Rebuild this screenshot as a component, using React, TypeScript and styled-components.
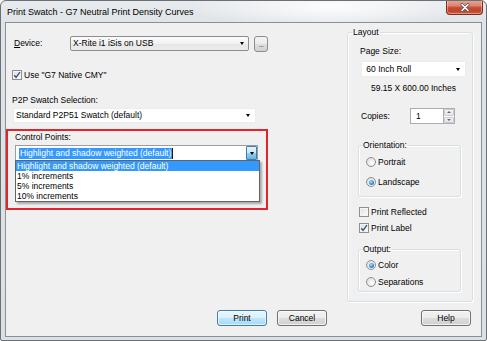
import React from 'react';
import styled, { createGlobalStyle, css } from 'styled-components';

const Global = createGlobalStyle`
  html, body { margin: 0; padding: 0; background: #ffffff; }
  body {
    font-family: "Liberation Sans", Arial, sans-serif;
    font-size: 8.5px;
    color: #000;
  }
  * { box-sizing: border-box; }
`;

const Window = styled.div`
  width: 487px;
  height: 341px;
  border: 1px solid #6b7077;
  border-radius: 6px 6px 2px 2px;
  background:
    radial-gradient(ellipse 140px 22px at 330px 6px, rgba(255,255,255,0.9), rgba(255,255,255,0) 100%),
    linear-gradient(180deg, #e8ebee 0px, #dfe3e7 22px, #dce0e5 100%);
  display: flex;
  flex-direction: column;
  overflow: hidden;
`;

const TitleBar = styled.div`
  height: 21px;
  display: flex;
  align-items: flex-start;
  justify-content: space-between;
  padding-left: 6px;
`;

const TitleText = styled.div`
  font-size: 9px;
  line-height: 12px;
  padding-top: 5px;
  color: #000;
  white-space: nowrap;
`;

const CloseButton = styled.div`
  width: 37px;
  height: 15px;
  margin-right: 3px;
  margin-top: -1px;
  border: 1px solid #7f2a1e;
  border-top: none;
  border-radius: 0 0 4px 4px;
  background: linear-gradient(180deg, #e9a796 0%, #dc8670 40%, #c84a32 55%, #c0442c 80%, #d0643f 100%);
  box-shadow: inset 0 0 0 1px rgba(255,255,255,0.35);
  display: flex;
  align-items: center;
  justify-content: center;
`;

const Client = styled.div`
  margin: 0 4px;
  height: 315px;
  border: 1px solid #8b9096;
  background: #f0f0f0;
  display: flex;
  flex-direction: column;
`;

const TopArea = styled.div`
  display: flex;
  align-items: flex-start;
`;

const LeftColumn = styled.div`
  width: 262px;
  display: flex;
  flex-direction: column;
`;

const Label = styled.div<{ $indent?: number; $mt?: number; $w?: number }>`
  line-height: 11px;
  white-space: nowrap;
  padding-left: ${p => p.$indent ?? 0}px;
  margin-top: ${p => p.$mt ?? 0}px;
  ${p => p.$w !== undefined && css`width: ${p.$w}px; flex: none;`}
`;

const DeviceRow = styled.div`
  display: flex;
  align-items: flex-start;
  margin-top: 13px;
  height: 16px;
`;

const DeviceLabel = styled(Label)`
  margin-top: 2px;
`;

const Arrow = styled.span<{ $mr?: number }>`
  margin-left: auto;
  margin-right: ${p => p.$mr ?? 4}px;
  width: 0;
  height: 0;
  border-left: 2.5px solid transparent;
  border-right: 2.5px solid transparent;
  border-top: 3px solid #000;
`;

const Combo = styled.div<{ $variant: 'button' | 'flat' | 'edit'; $w: number; $h?: number; $ml?: number; $mt?: number }>`
  position: relative;
  display: flex;
  align-items: center;
  flex: none;
  width: ${p => p.$w}px;
  height: ${p => p.$h ?? 15}px;
  margin-left: ${p => p.$ml ?? 0}px;
  margin-top: ${p => p.$mt ?? 0}px;
  padding-left: 2px;
  white-space: nowrap;
  line-height: 11px;
  ${p => p.$variant === 'button' && css`
    border: 1px solid #8d8d8d;
    border-radius: 2px;
    background: linear-gradient(180deg, #fbfbfb 0%, #f1f1f1 50%, #e6e6e6 51%, #ececec 100%);
  `}
  ${p => p.$variant === 'flat' && css`
    border: 1px solid #ececec;
    background: #ffffff;
  `}
  ${p => p.$variant === 'edit' && css`
    border: 1px solid #9c9c9c;
    background: #ffffff;
    padding-left: 2px;
  `}
`;

const DotsButton = styled.div`
  width: 17px;
  height: 16px;
  margin-left: 5px;
  border: 1px solid #8d8d8d;
  border-radius: 3px;
  background: linear-gradient(180deg, #f4f4f4 0%, #ececec 50%, #dedede 51%, #d2d2d2 100%);
  display: flex;
  align-items: center;
  justify-content: center;
  color: #5a3a6a;
  font-size: 8px;
  line-height: 8px;
  padding-top: 2px;
  letter-spacing: -0.5px;
`;

const CheckRow = styled.div<{ $mt: number; $indent: number }>`
  display: flex;
  align-items: center;
  height: 10px;
  margin-top: ${p => p.$mt}px;
  padding-left: ${p => p.$indent}px;
  gap: 2px;
  white-space: nowrap;
  line-height: 11px;
`;

const CheckBox = styled.span`
  flex: none;
  width: 10px;
  height: 10px;
  border: 1px solid #8e8f8f;
  background: linear-gradient(135deg, #dcdcdc 0%, #f2f2f2 60%, #ffffff 100%);
  box-shadow: inset 0 0 0 1px #f4f4f4;
  display: flex;
  align-items: center;
  justify-content: center;
`;

const RedFrame = styled.div`
  margin-top: 6px;
  width: 262px;
  height: 81px;
  border: 2px solid #e3242b;
  padding: 1px 0 0 7px;
  display: flex;
  flex-direction: column;
`;

const ComboArrowButton = styled.span`
  margin-left: auto;
  margin-right: 0px;
  width: 11px;
  height: 14px;
  border: 1px solid #3c7fb1;
  border-radius: 1px;
  background: linear-gradient(180deg, #e5f4fc 0%, #c4e5f6 50%, #98d1ef 51%, #68b3db 100%);
  display: flex;
  align-items: center;
  justify-content: center;
`;

const SmallTriangle = styled.span`
  width: 0;
  height: 0;
  border-left: 2.5px solid transparent;
  border-right: 2.5px solid transparent;
  border-top: 3px solid #000;
`;

const Selected = styled.span`
  margin-left: 1px;
  background: #3399ff;
  color: #fff;
  padding: 0 1px;
  line-height: 11px;
  border-right: 1px solid #1a1a1a;
`;

const DropList = styled.div`
  position: absolute;
  left: -1px;
  top: 100%;
  width: 245px;
  border: 1px solid #646464;
  background: #fff;
  box-shadow: 2px 2px 2px rgba(0,0,0,0.3);
  z-index: 2;
`;

const DropItem = styled.div<{ $active?: boolean }>`
  height: 10px;
  line-height: 10px;
  padding-left: 1px;
  white-space: nowrap;
  ${p => p.$active && css`
    background: #3399ff;
    color: #fff;
  `}
`;

const GroupBox = styled.fieldset<{ $w: number; $mt: number; $mr?: number; $auto?: boolean }>`
  margin: ${p => p.$mt}px ${p => p.$mr ?? 0}px 0 ${p => (p.$auto ? 'auto' : '0')};
  padding: 0;
  min-width: 0;
  width: ${p => p.$w}px;
  border: 1px solid #d5dfe5;
  border-radius: 3px;
  box-shadow: 1px 1px 0 #ffffff, inset 1px 1px 0 #ffffff;
`;

const Legend = styled.legend<{ $ml: number }>`
  margin-left: ${p => p.$ml}px;
  padding: 0 1px;
  line-height: 11px;
  white-space: nowrap;
`;

const LayoutBody = styled.div`
  padding: 8px 7px 9px 10px;
  display: flex;
  flex-direction: column;
`;

const SizeText = styled.div`
  margin: 6px 0 0 3px;
  width: 105px;
  text-align: center;
  line-height: 11px;
  white-space: nowrap;
`;

const CopiesRow = styled.div`
  margin-top: 14px;
  padding-left: 3px;
  height: 16px;
  display: flex;
  align-items: center;
`;

const SpinInput = styled.div`
  width: 33px;
  height: 16px;
  border: 1px solid #abadb3;
  border-right: none;
  background: #fff;
  padding-left: 5px;
  line-height: 13px;
  display: flex;
  align-items: center;
`;

const SpinButtons = styled.div`
  width: 12px;
  height: 16px;
  border: 1px solid #abadb3;
  background: #fff;
  display: flex;
  flex-direction: column;
  gap: 1px;
  padding: 0;
`;

const SpinHalf = styled.div<{ $down?: boolean }>`
  flex: 1;
  border: 1px solid #c8ccd2;
  border-radius: 1px;
  background: linear-gradient(180deg, #f4f4f4 0%, #e6e6e6 100%);
  display: flex;
  align-items: center;
  justify-content: center;
  &::after {
    content: "";
    width: 0;
    height: 0;
    border-left: 2px solid transparent;
    border-right: 2px solid transparent;
    ${p => p.$down
      ? css`border-top: 2px solid #5a6a86;`
      : css`border-bottom: 2px solid #5a6a86;`}
  }
`;

const RadioRow = styled.div<{ $mt: number }>`
  display: flex;
  align-items: center;
  gap: 2px;
  height: 12px;
  margin-top: ${p => p.$mt}px;
  padding-left: 7px;
  line-height: 11px;
  white-space: nowrap;
`;

const Radio = styled.span<{ $checked?: boolean }>`
  flex: none;
  width: 10px;
  height: 10px;
  border-radius: 50%;
  border: 1px solid #8e8f8f;
  background: radial-gradient(circle at 65% 65%, #ffffff 0%, #e6e6e6 60%, #d2d2d2 100%);
  display: flex;
  align-items: center;
  justify-content: center;
  &::after {
    content: "";
    width: 5px;
    height: 5px;
    border-radius: 50%;
    display: ${p => (p.$checked ? 'block' : 'none')};
    background: radial-gradient(circle at 40% 35%, #b4e6ff 0%, #3d95d8 50%, #1b5c9c 100%);
  }
`;

const GroupInner = styled.div<{ $pb: number }>`
  padding-bottom: ${p => p.$pb}px;
  display: flex;
  flex-direction: column;
`;

const ButtonRow = styled.div`
  margin-top: 8px;
  padding-left: 211px;
  padding-right: 10px;
  display: flex;
  align-items: center;
  gap: 10px;
`;

const PushButton = styled.div<{ $default?: boolean; $pushRight?: boolean }>`
  width: 50px;
  height: 16px;
  border: 1px solid #707070;
  border-radius: 3px;
  background: linear-gradient(180deg, #f2f2f2 0%, #ebebeb 50%, #dddddd 51%, #cfcfcf 100%);
  box-shadow: inset 0 0 0 1px rgba(255,255,255,0.7);
  display: flex;
  align-items: center;
  justify-content: center;
  line-height: 11px;
  ${p => p.$pushRight && css`margin-left: auto;`}
  ${p => p.$default && css`
    border-color: #3c7fb1;
    background: linear-gradient(180deg, #eaf6fd 0%, #d9f0fc 50%, #bee6fd 51%, #a7d9f5 100%);
    box-shadow: inset 0 0 0 1px rgba(255,255,255,0.6);
  `}
`;

const CheckMark = () => (
  <svg width="8" height="8" viewBox="0 0 8 8">
    <path d="M1.2 4.2 L3.1 6.3 L6.9 1.2" fill="none" stroke="#3d5185" strokeWidth="1.4" />
  </svg>
);

export default function App() {
  return (
    <>
      <Global />
      <Window>
        <TitleBar>
          <TitleText>Print Swatch - G7 Neutral Print Density Curves</TitleText>
          <CloseButton>
            <svg width="10" height="9" viewBox="0 0 10 9">
              <path d="M2 1.5 L8 7.5 M8 1.5 L2 7.5" stroke="#5a5a5a" strokeWidth="3" strokeLinecap="round" />
              <path d="M2 1.5 L8 7.5 M8 1.5 L2 7.5" stroke="#ffffff" strokeWidth="1.5" strokeLinecap="round" />
            </svg>
          </CloseButton>
        </TitleBar>
        <Client>
          <TopArea>
            <LeftColumn>
              <DeviceRow>
                <DeviceLabel $indent={8} $w={64}><u>D</u>evice:</DeviceLabel>
                <Combo $variant="button" $w={179}>
                  X-Rite i1 iSis on USB
                  <Arrow $mr={4} />
                </Combo>
                <DotsButton>...</DotsButton>
              </DeviceRow>

              <CheckRow $mt={18} $indent={6}>
                <CheckBox><CheckMark /></CheckBox>
                <span>Use "G7 Native CMY"</span>
              </CheckRow>

              <Label $indent={6} $mt={15}>P2P Swatch Selection:</Label>
              <Combo $variant="flat" $w={243} $ml={7} $mt={2}>
                Standard P2P51 Swatch (default)
                <Arrow $mr={5} />
              </Combo>

              <RedFrame>
                <Label>Control Points:</Label>
                <Combo $variant="edit" $w={243} $h={16} $mt={2}>
                  <Selected>Highlight and shadow weighted (default)</Selected>
                  <ComboArrowButton><SmallTriangle /></ComboArrowButton>
                  <DropList>
                    <DropItem $active>Highlight and shadow weighted (default)</DropItem>
                    <DropItem>1% increments</DropItem>
                    <DropItem>5% increments</DropItem>
                    <DropItem>10% increments</DropItem>
                  </DropList>
                </Combo>
              </RedFrame>
            </LeftColumn>

            <GroupBox $w={126} $mt={4} $mr={8} $auto>
              <Legend $ml={4}>Layout</Legend>
              <LayoutBody>
                <Label $indent={2}>Page Size:</Label>
                <Combo $variant="flat" $w={105} $h={16} $ml={3} $mt={4}>
                  &nbsp;60 Inch Roll
                  <Arrow $mr={5} />
                </Combo>
                <SizeText>59.15 X 600.00 Inches</SizeText>
                <CopiesRow>
                  <Label $w={49}>Copies:</Label>
                  <SpinInput>1</SpinInput>
                  <SpinButtons>
                    <SpinHalf />
                    <SpinHalf $down />
                  </SpinButtons>
                </CopiesRow>

                <GroupBox $w={103} $mt={16}>
                  <Legend $ml={3}>Orientation:</Legend>
                  <GroupInner $pb={8}>
                    <RadioRow $mt={5}><Radio />Portrait</RadioRow>
                    <RadioRow $mt={8}><Radio $checked />Landscape</RadioRow>
                  </GroupInner>
                </GroupBox>

                <CheckRow $mt={10} $indent={1}>
                  <CheckBox />
                  <span>Print Reflected</span>
                </CheckRow>
                <CheckRow $mt={6} $indent={1}>
                  <CheckBox><CheckMark /></CheckBox>
                  <span>Print Label</span>
                </CheckRow>

                <GroupBox $w={103} $mt={11}>
                  <Legend $ml={3}>Output:</Legend>
                  <GroupInner $pb={3}>
                    <RadioRow $mt={4}><Radio $checked />Color</RadioRow>
                    <RadioRow $mt={5}><Radio />Separations</RadioRow>
                  </GroupInner>
                </GroupBox>
              </LayoutBody>
            </GroupBox>
          </TopArea>

          <ButtonRow>
            <PushButton $default>Print</PushButton>
            <PushButton>Cancel</PushButton>
            <PushButton $pushRight>Help</PushButton>
          </ButtonRow>
        </Client>
      </Window>
    </>
  );
}
